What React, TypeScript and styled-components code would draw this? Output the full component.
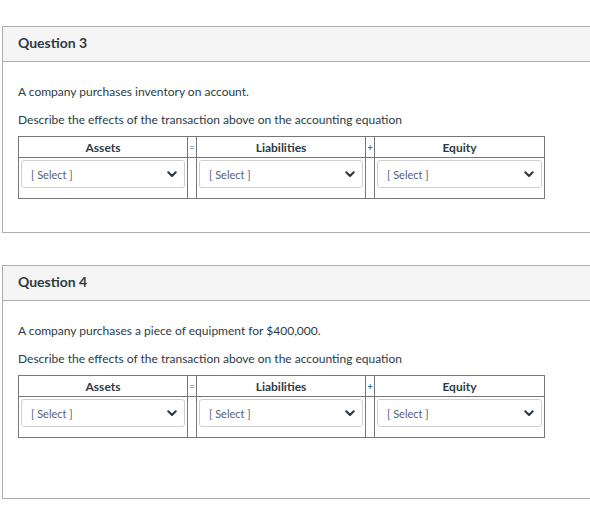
import styled, { createGlobalStyle } from 'styled-components';

const GlobalStyle = createGlobalStyle`
    html, body {
        margin: 0;
        padding: 0;
        background: #fff;
        overflow: hidden;
    }
    body {
        font-family: Lato, "Liberation Sans", sans-serif;
        color: #2d3b45;
    }
`;

interface Question {
    title: string;
    prompt: string;
    bodyHeight: number;
}

const questions: Question[] = [
    {
        title: 'Question 3',
        prompt: 'A company purchases inventory on account.',
        bodyHeight: 170,
    },
    {
        title: 'Question 4',
        prompt: 'A company purchases a piece of equipment for $400,000.',
        bodyHeight: 197,
    },
];

const Chevron = () => (
    <svg width="10" height="7" viewBox="0 0 10 7">
        <path d="M1.3 1.3 L5 5 L8.7 1.3" fill="none" stroke="#2d3b45" strokeWidth="2.1" strokeLinecap="round" strokeLinejoin="round" />
    </svg>
);

const SelectBox = () => (
    <Select>
        <SelectText>[ Select ]</SelectText>
        <Chevron />
    </Select>
);

const EquationTable = () => (
    <Table>
        <colgroup>
            <col style={{ width: 169 }} />
            <col style={{ width: 9 }} />
            <col style={{ width: 169 }} />
            <col style={{ width: 9 }} />
            <col style={{ width: 170 }} />
        </colgroup>
        <thead>
            <tr>
                <HeadCell>Assets</HeadCell>
                <SignCell>=</SignCell>
                <HeadCell>Liabilities</HeadCell>
                <SignCell $plus>+</SignCell>
                <HeadCell>Equity</HeadCell>
            </tr>
        </thead>
        <tbody>
            <tr>
                <BodyCell><SelectBox /></BodyCell>
                <BodyCell />
                <BodyCell><SelectBox /></BodyCell>
                <BodyCell />
                <BodyCell><SelectBox /></BodyCell>
            </tr>
        </tbody>
    </Table>
);

const App = () => (
    <>
        <GlobalStyle />
        <Page>
            {questions.map((q) => (
                <Card key={q.title}>
                    <Header>{q.title}</Header>
                    <Body $height={q.bodyHeight}>
                        <Paragraph $gap={13}>{q.prompt}</Paragraph>
                        <Paragraph $gap={9}>Describe the effects of the transaction above on the accounting equation</Paragraph>
                        <EquationTable />
                    </Body>
                </Card>
            ))}
        </Page>
    </>
);

const Page = styled.div`
    width: 590px;
    padding: 26px 0 0 2px;
    display: flex;
    flex-direction: column;
    gap: 32px;
    overflow: hidden;
`;

const Card = styled.div`
    width: 620px;
    border: 1px solid #acacac;
    box-sizing: border-box;
    background: #fff;
`;

const Header = styled.div`
    height: 35px;
    background: #f5f5f5;
    border-bottom: 1px solid #acacac;
    padding: 0 0 3px 15px;
    box-sizing: border-box;
    display: flex;
    align-items: center;
    font-size: 14px;
    font-weight: 700;
    color: #2d3b45;
`;

const Body = styled.div<{ $height: number }>`
    height: ${({ $height }) => $height}px;
    padding: 22px 0 0 15px;
    box-sizing: border-box;
`;

const Paragraph = styled.p<{ $gap: number }>`
    margin: 0 0 ${({ $gap }) => $gap}px;
    font-size: 12px;
    line-height: 15px;
    color: #2d3b45;
`;

const Table = styled.table`
    border-collapse: collapse;
    table-layout: fixed;
    width: 527px;
`;

const HeadCell = styled.th`
    border: 1px solid #777;
    height: 20px;
    padding: 0;
    font-size: 12px;
    font-weight: 700;
    text-align: center;
    color: #2d3b45;
`;

const SignCell = styled.th<{ $plus?: boolean }>`
    border: 1px solid #777;
    padding: 0;
    font-size: 9px;
    font-weight: 700;
    text-align: center;
    color: ${({ $plus }) => ($plus ? '#2f6f9e' : '#8fa3b0')};
`;

const BodyCell = styled.td`
    border: 1px solid #777;
    padding: 2px 2px 10px;
    height: 28px;
    vertical-align: top;
`;

const Select = styled.div`
    height: 28px;
    box-sizing: border-box;
    border: 1px solid #cfcfcf;
    border-radius: 3px;
    display: flex;
    align-items: center;
    justify-content: space-between;
    padding: 0 7px 0 9px;
    background: #fff;
`;

const SelectText = styled.span`
    font-size: 11px;
    color: #56607a;
`;

export default App;
